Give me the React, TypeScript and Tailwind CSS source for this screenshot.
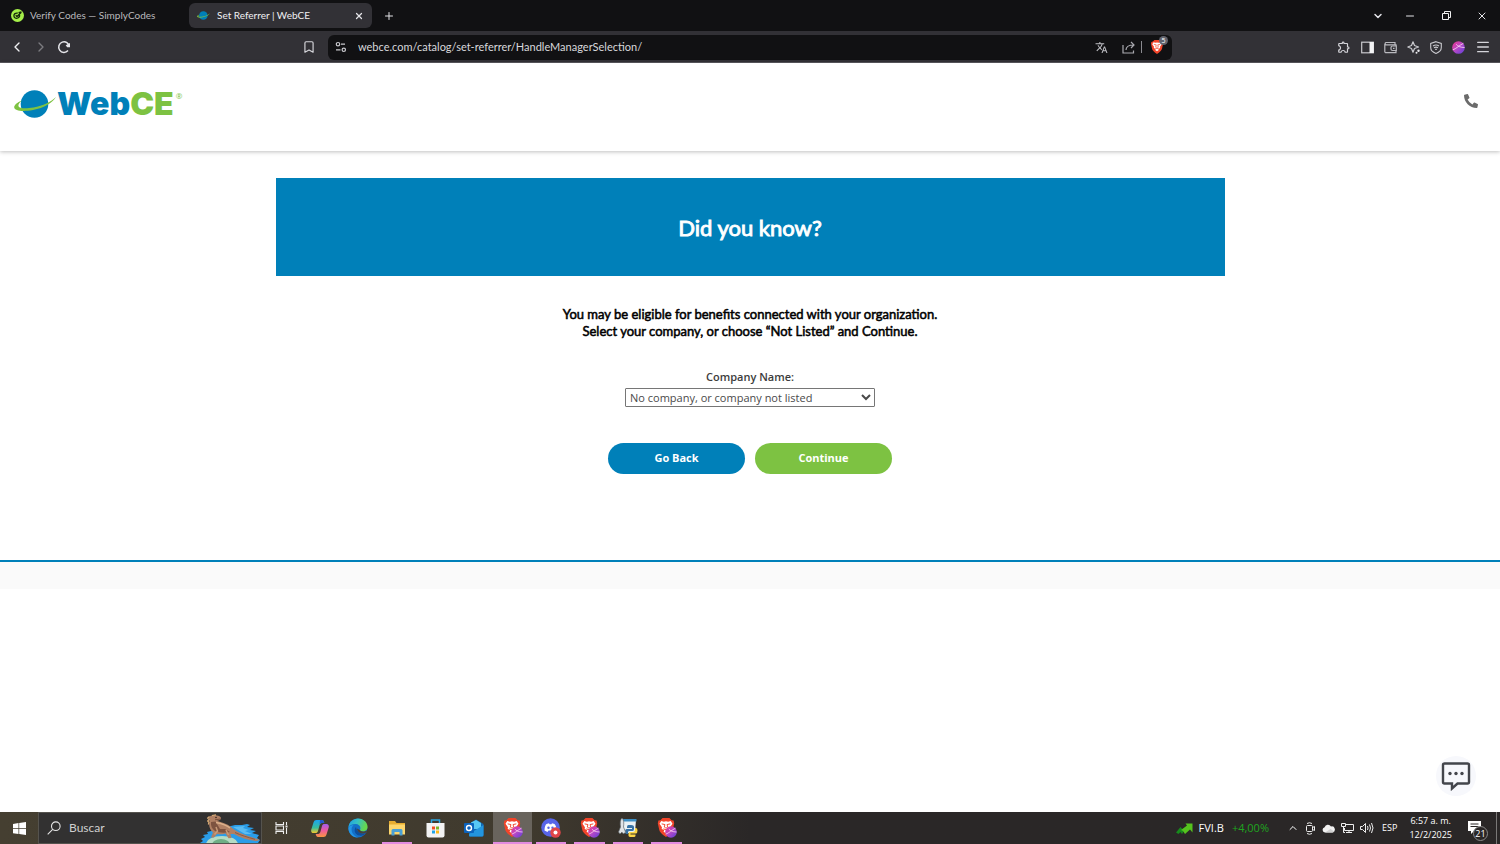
import type { ReactNode } from 'react';
import { ChevronLeft, ChevronRight, ChevronDown, ChevronUp, Minus, X, Plus, Bookmark, Menu } from 'lucide-react';
import { MdTranslate, MdOutlineExtension } from 'react-icons/md';
import { FaPhoneAlt } from 'react-icons/fa';

interface TaskItem {
  label: string;
  icon: ReactNode;
  open?: boolean;
  active?: boolean;
}

function Planet({ className }: { className: string }) {
  return (
    <svg viewBox="0 0 42 28" className={className} aria-hidden="true">
      <circle cx="20.5" cy="14" r="13.8" fill="#0080b9" />
      <path
        d="M8 10.5C3 12.5 0 15 .2 17.5C.6 21 9 21.8 19 20C30 18 39 12.5 42 7C37 12 29 15.8 19.5 17.5C11.5 18.9 5.5 18.5 4.5 16.3C3.9 14.8 5.5 12.5 8 10.5Z"
        fill="#7dc242"
      />
    </svg>
  );
}

function SimplyCodesIcon() {
  return (
    <svg viewBox="0 0 13 13" className="h-[13px] w-[13px]" aria-hidden="true">
      <circle cx="6.5" cy="6.5" r="6.5" fill="#a6f04a" />
      <path
        d="M6.8 4.2C4.5 3.6 2.8 5 2.9 6.9C3 8.8 5 9.8 6.8 9C8.4 8.2 8.8 6.6 8.3 5.5M4.7 6.2L6 7.5L10.3 3.3M7.5 3.7L10.5 3"
        fill="none"
        stroke="#17270b"
        strokeWidth="1.3"
      />
    </svg>
  );
}

function BraveShield({ className }: { className: string }) {
  return (
    <svg viewBox="0 0 20 22" className={className} aria-hidden="true">
      <path
        d="M6 0H14L16.5 2.5L18.8 3L19.5 6L18 13C17.5 16 15 18.5 10 22C5 18.5 2.5 16 2 13L.5 6L1.2 3L3.5 2.5Z"
        fill="#f2452a"
      />
      <path
        d="M4.5 3.6L7.5 4.3L10 3.8L12.5 4.3L15.5 3.6L17.5 6.6L14.7 10.6L15 12.6L12 14L12.8 15.8L10 17.6L7.2 15.8L8 14L5 12.6L5.3 10.6L2.5 6.6Z"
        fill="#fff"
      />
      <path
        d="M5 6.8L8.8 7.6L8 10.4L9.2 11.3H10.8L12 10.4L11.2 7.6L15 6.8M7 12.6L10 13.6L13 12.6"
        fill="none"
        stroke="#f2452a"
        strokeWidth="1.1"
      />
    </svg>
  );
}

function ProfileBall({ className }: { className: string }) {
  return (
    <svg viewBox="0 0 14 14" className={className} aria-hidden="true">
      <defs>
        <linearGradient id="ball" x1="0" y1="0" x2="1" y2="1">
          <stop offset="0" stopColor="#f0388c" />
          <stop offset=".5" stopColor="#b448c8" />
          <stop offset="1" stopColor="#5a3fd8" />
        </linearGradient>
      </defs>
      <circle cx="7" cy="7" r="6.8" fill="url(#ball)" />
      <path
        d="M.8 9.5C4.5 8.5 8 4.5 12.3 2.5M4.5 3.5C6 5.5 9 7 13.5 7"
        fill="none"
        stroke="#ffd5f2"
        strokeWidth=".9"
      />
    </svg>
  );
}

function BraveProfile() {
  return (
    <span className="relative block h-5 w-5">
      <BraveShield className="h-[19px] w-[18px]" />
      <ProfileBall className="absolute right-0 bottom-0 h-3 w-3" />
    </span>
  );
}

function TuneIcon() {
  return (
    <svg viewBox="0 0 12 12" className="h-3 w-3" fill="none" stroke="#c9c9ce" strokeWidth="1.2" aria-hidden="true">
      <circle cx="3" cy="3.2" r="1.7" />
      <path d="M6 3.2H10M1 8.8H5.5" />
      <circle cx="8.8" cy="8.8" r="1.7" />
    </svg>
  );
}

function ReloadIcon() {
  return (
    <svg viewBox="0 0 14 14" className="h-3.5 w-3.5" aria-hidden="true">
      <path d="M11 10.6A5.3 5.3 0 1 1 12.3 6.6" fill="none" stroke="#e6e6ea" strokeWidth="1.5" />
      <path d="M8.7 5.2L13 3V7.3H10.2Z" fill="#e6e6ea" />
    </svg>
  );
}

function ShareIcon() {
  return (
    <svg viewBox="0 0 13 13" className="h-[13px] w-[13px]" fill="none" stroke="#a9a9af" strokeWidth="1.2" aria-hidden="true">
      <path d="M1 4V12H11.5V9.5" />
      <path d="M4 9C4 5.5 6.5 4 11.8 4M9 1L12 4L9 7" />
    </svg>
  );
}

function RestoreIcon() {
  return (
    <svg viewBox="0 0 9 9" className="h-[9px] w-[9px]" fill="none" stroke="#f0f0f0" aria-hidden="true">
      <path d="M.5 2.5H6.5V8.5H.5ZM2.5 2.5V.5H8.5V6.5H6.5" />
    </svg>
  );
}

function SidebarIcon() {
  return (
    <svg viewBox="0 0 13 13" className="h-[13px] w-[13px]" aria-hidden="true">
      <rect x=".7" y="1.2" width="11.6" height="10.6" fill="none" stroke="#c9c9ce" strokeWidth="1.2" />
      <path d="M8.5 1H12.8V12H8.5Z" fill="#f3f3f5" />
    </svg>
  );
}

function WalletIcon() {
  return (
    <svg viewBox="0 0 13 13" className="h-[13px] w-[13px]" fill="none" stroke="#b9b9be" strokeWidth="1.2" aria-hidden="true">
      <path d="M12 5V3.8H2A1.2 1.2 0 0 1 2 1.5H11V3.8M.8 2.7V10.5A1.2 1.2 0 0 0 2 11.7H12V9.5" />
      <path d="M12.3 5H8.5A1.5 1.5 0 0 0 7 6.5V8A1.5 1.5 0 0 0 8.5 9.5H12.3Z" />
      <path d="M9 7.3H10.5" />
    </svg>
  );
}

function LeoIcon() {
  return (
    <svg viewBox="0 0 13 13" className="h-[13px] w-[13px]" fill="none" stroke="#c9c9ce" strokeWidth="1.2" aria-hidden="true">
      <path d="M6 .8L7.5 4.5L11.5 6L7.5 7.5L6 11.2L4.5 7.5L.8 6L4.5 4.5Z" strokeLinejoin="round" />
      <circle cx="11.5" cy="9.8" r="1.2" fill="#e9e9ee" stroke="none" />
      <circle cx="9.5" cy="11.8" r="1" fill="#e9e9ee" stroke="none" />
    </svg>
  );
}

function VpnIcon() {
  return (
    <svg viewBox="0 0 12 13" className="h-[13px] w-3" fill="none" stroke="#c9c9ce" strokeWidth="1.1" aria-hidden="true">
      <path d="M6 .7L11.3 2.5V6.5C11.3 9.5 9 11.3 6 12.4C3 11.3.7 9.5.7 6.5V2.5Z" />
      <path d="M3 5C5 3.7 7 3.7 9 5M4 6.7C5.3 5.9 6.7 5.9 8 6.7M5.2 8.4H6.8" />
    </svg>
  );
}

function WindowsIcon() {
  return (
    <svg viewBox="0 0 13 13" className="h-[13px] w-[13px]" fill="#fff" aria-hidden="true">
      <path d="M0 1.9L5.5 1.1V6.2H0ZM6.2 1L13 0V6.2H6.2ZM0 6.9H5.5V12L0 11.2ZM6.2 6.9H13V13L6.2 12.1Z" />
    </svg>
  );
}

function LizardArt() {
  return (
    <svg viewBox="0 0 62 30" className="h-[30px] w-[62px]" aria-hidden="true">
      <path
        d="M1 30L4 28L2 26L6 24L4 22L9 21L8 19L16 17L28 14L36 12H43L48 11L51 12L48 14L55 15L51 17L57 18L53 20L60 22L58 25L61 27L59 30Z"
        fill="#2a9de9"
      />
      <path d="M34 14L46 13L44 15L50 17L46 18L53 21H46Z" fill="#5bbcf2" />
      <ellipse cx="23" cy="31" rx="16" ry="8" fill="#b5dcc4" />
      <ellipse cx="22" cy="32" rx="9" ry="6" fill="#6fae85" />
      <path
        d="M10 5C10 3 12.5 2 15.5 2.2C19 2.3 22 3.2 22 5.3C22 7 20 7.5 18 7.8C22.5 9.5 28 10.5 32 14C37 19 47 22.5 60 26.5C60.500 27.300 59 28 57 28C48 27 41 24.500 35 21L31.500 21L32.500 25L29.500 25.300L26.500 20.500C23.500 21.500 20 21.500 18 21L15 24.500L12 24.500L14 19.500C11 17 9.500 13 10.500 9Z"
        fill="#b08064"
      />
      <path d="M12 9C11.500 13 13 16 16 18C20 20 26 20 31 19L26 16L21 16L16.500 8.500Z" fill="#7d5340" />
      <path d="M17 9.500C22 10.500 27 11.500 31 15" fill="none" stroke="#dbb08b" strokeWidth="1.300" />
      <path d="M36 19.500C42 22.500 48 24 56 26.300" fill="none" stroke="#8a5b44" />
      <path d="M10.500 3.500L8.700 5L10 6.500L8.700 8L10 9.500L9.300 11.500M13 2.500L17 1.800" fill="none" stroke="#dcae78" strokeWidth="1.200" />
      <path d="M17 14L18.500 18L15.500 21.500M27 17L29.500 22" fill="none" stroke="#c99a77" strokeWidth="1.500" />
      <path d="M16 6.800L21.500 6" stroke="#6b4332" strokeWidth=".8" />
      <circle cx="17" cy="4.500" r=".8" fill="#332018" />
    </svg>
  );
}

function TaskViewIcon() {
  return (
    <svg viewBox="0 0 13 12" className="h-3 w-[13px]" fill="none" stroke="#eee" strokeWidth="1.1" aria-hidden="true">
      <path d="M1 0V2.5H8.5V0M1 12V9.5H8.5V12M1 4H8.5V8H1ZM11.5 0V3M11.5 6V12" />
      <path d="M10.5 3.5H12.5V5.5H10.5Z" fill="#eee" stroke="none" />
    </svg>
  );
}

function CopilotIcon() {
  return (
    <svg viewBox="0 0 18 17" className="h-[17px] w-[18px]" aria-hidden="true">
      <defs>
        <linearGradient id="copA" x1="0" y1="0" x2="0" y2="1">
          <stop offset="0" stopColor="#1aa3f0" />
          <stop offset=".6" stopColor="#39bd9a" />
          <stop offset="1" stopColor="#f4c92c" />
        </linearGradient>
        <linearGradient id="copB" x1="0" y1="0" x2="0" y2="1">
          <stop offset="0" stopColor="#a35cf0" />
          <stop offset=".5" stopColor="#ee5a9c" />
          <stop offset="1" stopColor="#fa9440" />
        </linearGradient>
      </defs>
      <path d="M5.5 0H11C12.5 0 13 1.5 13.3 3H11C9.5 3 9 4 8.5 5.5L7 11C6.5 12.5 5.8 13 4.5 13H2.5C.5 13-.2 11.5.3 9.5L2.5 2.5C3 .8 4 0 5.5 0Z" fill="url(#copA)" />
      <path d="M12.5 17H7C5.5 17 5 15.5 4.7 14H7C8.5 14 9 13 9.5 11.5L11 6C11.5 4.5 12.2 4 13.5 4H15.5C17.5 4 18.2 5.5 17.7 7.5L15.5 14.5C15 16.2 14 17 12.5 17Z" fill="url(#copB)" />
      <path d="M9 0H11C12.5 0 13 1.5 13.3 3H11C10 3 9 3.5 8.5 5Z" fill="#2459cf" />
    </svg>
  );
}

function EdgeIcon() {
  return (
    <svg viewBox="0 0 20 20" className="h-5 w-5" aria-hidden="true">
      <defs>
        <linearGradient id="edge" x1="0" y1="0" x2="1" y2=".3">
          <stop offset="0" stopColor="#1d9de4" />
          <stop offset=".5" stopColor="#35c1c4" />
          <stop offset="1" stopColor="#67d84b" />
        </linearGradient>
      </defs>
      <circle cx="9.8" cy="10" r="9.5" fill="#1470c8" />
      <path d="M.4 9.5C1 4 5 .5 10 .5C16 .5 19.7 5 19.6 9C19.5 12 17 13.5 14.5 13.5C12.5 13.5 11.5 12.8 12 11.9C13 10.5 12.5 6.5 8 6C4.5 5.7 1.5 7 .4 9.5Z" fill="url(#edge)" />
      <path d="M8 9C5.5 11.5 6.5 16.5 11 17.5C14 18.1 16.5 17 18.2 15C15 16.5 9.5 15.5 8 9Z" fill="#0d4f9c" />
      <path d="M11.9 12C12.6 13.3 15 14 17.5 12.9C19 12.3 19.5 13 18.5 14.5C15 16.5 9.5 15.5 9 10.5Z" fill="#48413a" />
      <path d="M4 9C2.5 13 5 18 10 19.5C5 20 .3 15.5.4 10C1 8 3 7 5.5 7.3Z" fill="#2496e6" />
    </svg>
  );
}

function FolderIcon() {
  return (
    <svg viewBox="0 0 18 16" className="h-4 w-[18px]" aria-hidden="true">
      <path d="M1 1H7L8.5 3H17V14H1Z" fill="#e7ad31" />
      <path d="M1 4.5H17V14.5H1Z" fill="#fdd66d" />
      <path d="M3.5 15.5V10.5Q3.5 9 5 9H13Q14.5 9 14.5 10.5V15.5H11.5V12H6.5V15.5Z" fill="#4a9fd4" />
    </svg>
  );
}

function StoreIcon() {
  return (
    <svg viewBox="0 0 19 19" className="h-[19px] w-[19px]" aria-hidden="true">
      <path d="M5.5 5V1H13.5V5" fill="none" stroke="#2ba6e0" strokeWidth="1.5" />
      <path d="M.5 4H18.5V16.5Q18.5 18.5 16.5 18.5H2.5Q.5 18.5.5 16.5Z" fill="#f3f3f3" />
      <path d="M6 7.5H9V10.5H6Z" fill="#f05023" />
      <path d="M10 7.5H13V10.5H10Z" fill="#7db928" />
      <path d="M6 11.5H9V14.5H6Z" fill="#20a3e8" />
      <path d="M10 11.5H13V14.5H10Z" fill="#fbb91a" />
    </svg>
  );
}

function OutlookIcon() {
  return (
    <svg viewBox="0 0 20 18" className="h-[18px] w-5" aria-hidden="true">
      <path d="M5 5L12 .5L19.5 5V16Q19.5 17.5 18 17.5H6Q5 17.5 5 16Z" fill="#1268b3" />
      <path d="M7 3.5L12 1L17 4V10H7Z" fill="#57c8f5" />
      <path d="M5 15L19.5 6V16Q19.5 17.5 18 17.5H6Q5 17.5 5 16Z" fill="#2395df" />
      <rect y="4" width="10" height="10" rx="1" fill="#0c63bd" />
      <circle cx="5" cy="9" r="2.5" fill="none" stroke="#fff" strokeWidth="1.4" />
    </svg>
  );
}

function DiscordIcon() {
  return (
    <svg viewBox="0 0 20 20" className="h-5 w-5" aria-hidden="true">
      <circle cx="9.5" cy="9.5" r="9.3" fill="#5865e8" />
      <path d="M3.5 12.5C3.5 9 4.5 6.5 5.5 6L8 5.3L8.5 6.2H10.5L11 5.3L13.5 6C14.5 7 15.5 9 15.5 12.5L12.5 14L11.5 12.5H7.5L6.5 14Z" fill="#fff" />
      <circle cx="7.5" cy="9.7" r="1.2" fill="#5865e8" />
      <circle cx="11.5" cy="9.7" r="1.2" fill="#5865e8" />
      <circle cx="14.5" cy="14.5" r="5.2" fill="#e04549" />
      <circle cx="14.5" cy="14.5" r="2" fill="#fff" />
    </svg>
  );
}

function PythonIcon() {
  return (
    <svg viewBox="0 0 20 20" className="h-5 w-5" aria-hidden="true">
      <path d="M3 1.5H18L17 15H4Z" fill="#e9f1f5" />
      <path d="M3 1H18.5V3.5H3Z" fill="#3d8fc4" />
      <path d="M13 7H10.5Q9 7 9 9V10H14V11H8.5Q7 11 7 13.5T8.5 16H10V14Q10 13 11.5 13H14.5Q16 13 16 11V9Q16 7 13 7Z" fill="#3672a5" />
      <path d="M13.5 19H16Q17.5 19 17.5 17.5V16.5H12.5V15.5H18Q19.5 15 19.5 12.5T18 10H17V12Q17 14 15 14H12Q10.5 14 10.5 15.5V17.5Q10.5 19 13.5 19Z" fill="#fbd545" />
      <path d="M4 0C6 2 6 5 5.5 9L7.5 14L5.5 16L4 14L2 16L.5 14L2.5 9C2 5 2 2 4 0Z" fill="#dfe3e6" stroke="#60676c" strokeWidth=".7" />
    </svg>
  );
}

function StockIcon() {
  return (
    <svg viewBox="0 0 17 11" className="h-[11px] w-[17px]" aria-hidden="true">
      <path d="M0 9.5L4.5 4L8 8L6 11L4.5 9L2.5 11Z" fill="#178a1c" />
      <path d="M5 7L11 2.5L9.5.5H16.5V9.5L14 6.5L9 11L7 8Z" fill="#55c31e" />
    </svg>
  );
}

function MeetIcon() {
  return (
    <svg viewBox="0 0 11 13" className="h-[13px] w-[11px]" fill="none" stroke="#eee" aria-hidden="true">
      <rect x="1.5" y="3.5" width="6" height="6" rx="1" />
      <path d="M7.5 5.5L9.5 4.5V8.5L7.5 7.5M2 1.5Q4.5 0 7 1.5M2 11.5Q4.5 13 7 11.5" />
    </svg>
  );
}

function CloudIcon() {
  return (
    <svg viewBox="0 0 13 9" className="h-[9px] w-[13px]" aria-hidden="true">
      <path d="M3 8.5A2.7 2.7 0 0 1 2.6 3.2A3.6 3.6 0 0 1 9 2.5A3 3 0 0 1 10.5 8.5Z" fill="#f2f2f2" />
      <path d="M3 8.5L8.5 5L12.2 7.5Q11.5 8.5 10.5 8.5Z" fill="#cfcfcf" />
    </svg>
  );
}

function NetworkIcon() {
  return (
    <svg viewBox="0 0 13 12" className="h-3 w-[13px]" fill="none" stroke="#eee" aria-hidden="true">
      <path d="M5 2.5H12.5V8.5H3.5V6M8 8.5V10.5M5 10.5H11M.5 1.5H4.5V4.5H.5ZM2.5 4.5V10.5H4" />
    </svg>
  );
}

function VolumeIcon() {
  return (
    <svg viewBox="0 0 14 12" className="h-3 w-3.5" fill="none" stroke="#eee" aria-hidden="true">
      <path d="M.5 4.5H2.5L5.5 1.5V10.5L2.5 7.5H.5ZM7.5 4Q8.5 6 7.5 8M9.5 2.5Q11.5 6 9.5 9.5M11.5 1Q14.5 6 11.5 11" />
    </svg>
  );
}

function SearchIcon() {
  return (
    <svg viewBox="0 0 14 14" className="h-3.5 w-3.5" fill="none" stroke="#e6e6e6" strokeWidth="1.1" aria-hidden="true">
      <circle cx="8.8" cy="5.2" r="4.3" />
      <path d="M5.7 8.3L.7 13.3" />
    </svg>
  );
}

function ChatIcon() {
  return (
    <svg viewBox="0 0 30 30" className="h-[30px] w-[30px]" aria-hidden="true">
      <path
        d="M3.5 2.5H26.5Q28 2.5 28 4V21Q28 22.5 26.5 22.5H16.5L11 27.5V22.5H3.5Q2 22.5 2 21V4Q2 2.5 3.5 2.5Z"
        fill="none"
        stroke="#43454b"
        strokeWidth="2.4"
      />
      <circle cx="9" cy="12.5" r="1.7" fill="#43454b" />
      <circle cx="15" cy="12.5" r="1.7" fill="#43454b" />
      <circle cx="21" cy="12.5" r="1.7" fill="#43454b" />
    </svg>
  );
}

const taskItems: TaskItem[] = [
  { label: 'Vista de tareas', icon: <TaskViewIcon /> },
  { label: 'Copilot', icon: <CopilotIcon /> },
  { label: 'Edge', icon: <EdgeIcon /> },
  { label: 'Explorador', icon: <FolderIcon />, open: true },
  { label: 'Store', icon: <StoreIcon /> },
  { label: 'Outlook', icon: <OutlookIcon /> },
  { label: 'Brave', icon: <BraveProfile />, open: true, active: true },
  { label: 'Discord', icon: <DiscordIcon />, open: true },
  { label: 'Brave 2', icon: <BraveProfile />, open: true },
  { label: 'Python', icon: <PythonIcon />, open: true },
  { label: 'Brave 3', icon: <BraveProfile />, open: true },
];

function TabBar() {
  return (
    <div className="flex h-[31px] items-center bg-[#111113] font-['Lato'] text-[10px] text-[#e4e4e8]">
      <button className="flex w-[189px] items-center gap-1.5 pl-[11px] text-[#b9b9bd]">
        <SimplyCodesIcon />
        <span>Verify Codes — SimplyCodes</span>
      </button>
      <div className="flex h-[25px] w-[183px] items-center rounded-md bg-[#323136] px-2">
        <Planet className="h-[9px] w-[13px]" />
        <span className="ml-[7px] flex-1 text-[#f0f0f3]">Set Referrer | WebCE</span>
        <button aria-label="Close tab">
          <X className="h-2.5 w-2.5" strokeWidth={3} />
        </button>
      </div>
      <button className="ml-[11px]" aria-label="New tab">
        <Plus className="h-3 w-3" strokeWidth={2} />
      </button>
      <div className="ml-auto flex items-center">
        <button className="flex w-7 justify-center" aria-label="Search tabs">
          <ChevronDown className="h-3 w-3" strokeWidth={3} />
        </button>
        <button className="flex w-9 justify-center" aria-label="Minimize">
          <Minus className="h-3 w-3" />
        </button>
        <button className="flex w-9 justify-center" aria-label="Restore">
          <RestoreIcon />
        </button>
        <button className="flex w-9 justify-center" aria-label="Close window">
          <X className="h-3 w-3" />
        </button>
      </div>
    </div>
  );
}

function Toolbar() {
  return (
    <div className="flex h-8 items-center border-b border-[#5a595e] bg-[#323136] pt-px text-[#d5d5da]">
      <div className="flex items-center gap-2 pl-[9px]">
        <button aria-label="Back">
          <ChevronLeft className="h-4 w-4 text-[#f0f0f3]" />
        </button>
        <button aria-label="Forward">
          <ChevronRight className="h-4 w-4 text-[#7c7b80]" />
        </button>
        <button aria-label="Reload">
          <ReloadIcon />
        </button>
      </div>
      <div className="flex flex-1 items-center justify-center gap-3 pl-[66px]">
        <button aria-label="Bookmark">
          <Bookmark className="h-3.5 w-3.5" />
        </button>
        <div className="flex h-[25px] w-[844px] items-center rounded-md bg-[#111113] pl-[7px] pr-0.5">
          <TuneIcon />
          <input
            aria-label="Address"
            className="ml-[11px] flex-1 bg-transparent font-['Lato'] text-[11px] text-[#d8d8dc] outline-none"
            defaultValue="webce.com/catalog/set-referrer/HandleManagerSelection/"
          />
          <button aria-label="Translate">
            <MdTranslate className="h-[13px] w-[13px] text-[#c0c0c5]" />
          </button>
          <button className="ml-3.5" aria-label="Share">
            <ShareIcon />
          </button>
          <span className="ml-1.5 h-3 w-px bg-[#8a8a90]" />
          <button className="relative ml-2 mr-1.5" aria-label="Shields">
            <BraveShield className="h-3.5 w-3.5" />
            <span className="absolute -right-1 -top-1 flex h-[9px] w-[9px] items-center justify-center rounded-full bg-[#62636d] text-[7px] leading-none text-white">
              5
            </span>
          </button>
        </div>
      </div>
      <div className="flex items-center gap-2.5 pr-[9px]">
        <button aria-label="Extensions">
          <MdOutlineExtension className="h-3.5 w-3.5" />
        </button>
        <button aria-label="Sidebar">
          <SidebarIcon />
        </button>
        <button aria-label="Wallet">
          <WalletIcon />
        </button>
        <button aria-label="Leo">
          <LeoIcon />
        </button>
        <button aria-label="VPN">
          <VpnIcon />
        </button>
        <button aria-label="Profile">
          <ProfileBall className="h-[13px] w-[13px]" />
        </button>
        <button aria-label="Menu">
          <Menu className="h-4 w-4" />
        </button>
      </div>
    </div>
  );
}

function SiteHeader() {
  return (
    <header className="flex h-[88px] items-center justify-between bg-white pl-3.5 pr-[22px] shadow-[0_1px_4px_rgba(0,0,0,0.25)]">
      <a href="#home" className="flex items-center pb-1.5" aria-label="WebCE">
        <Planet className="h-7 w-[42px]" />
        <span className="ml-px font-['Inter'] text-[32px] leading-7 font-black text-[#0080b9]">
          Web<span className="text-[#7dc242]">CE</span>
        </span>
        <span className="ml-0.5 self-start text-[8px] leading-3 text-[#7dc242]">®</span>
      </a>
      <a href="#phone" className="pb-3" aria-label="Phone">
        <FaPhoneAlt className="h-3.5 w-3.5 text-[#6b6b6b]" />
      </a>
    </header>
  );
}

function ReferrerForm() {
  return (
    <main className="flex flex-col items-center pt-[27px]">
      <h1 className="flex h-[98px] w-full max-w-[949px] items-center justify-center bg-[#0080b9] font-['Lato'] text-[22px] font-normal text-white [-webkit-text-stroke:0.04em]">
        Did you know?
      </h1>
      <p className="mt-[30px] text-center font-['Lato'] text-[13px] leading-[17px] font-normal text-black [-webkit-text-stroke:0.04em]">
        You may be eligible for benefits connected with your organization.
        <br />
        Select your company, or choose “Not Listed” and Continue.
      </p>
      <form className="mt-[27px] flex flex-col items-center" onSubmit={e => e.preventDefault()}>
        <label htmlFor="company" className="text-[11px] leading-5 font-semibold text-[#3c3c3c]">
          Company Name:
        </label>
        <select
          id="company"
          className="mt-px h-[19px] w-[250px] rounded-[1px] border border-[#767676] bg-white text-[11px] text-[#4a4a4a]"
        >
          <option>No company, or company not listed</option>
        </select>
        <div className="mt-9 flex gap-2.5 text-[11px] font-bold text-white">
          <button type="button" className="h-[31px] w-[137px] rounded-full bg-[#0080b9]">
            Go Back
          </button>
          <button type="submit" className="h-[31px] w-[137px] rounded-full bg-[#7dc242]">
            Continue
          </button>
        </div>
      </form>
    </main>
  );
}

function Taskbar() {
  return (
    <div className="flex h-8 items-stretch bg-linear-to-r from-[#453f31] via-[#403a2e] via-35% to-[#2a2727] to-50% text-white">
      <button className="flex w-[38px] items-center justify-center" aria-label="Inicio">
        <WindowsIcon />
      </button>
      <div className="flex w-[224px] items-center border border-[#55534e] bg-[#323131] pl-2">
        <SearchIcon />
        <input
          aria-label="Buscar"
          placeholder="Buscar"
          className="ml-2 w-[130px] bg-transparent font-['Lato'] text-xs outline-none placeholder:text-[#cfcfcf]"
        />
        <span className="ml-auto shrink-0">
          <LizardArt />
        </span>
      </div>
      <div className="grid w-[424px] grid-cols-11">
        {taskItems.map(item => (
          <button
            key={item.label}
            aria-label={item.label}
            className={`relative flex items-center justify-center ${item.active ? 'bg-[#69645d]' : ''}`}
          >
            {item.icon}
            {item.open && (
              <span
                className={`absolute bottom-0 h-0.5 bg-[#e28be0] ${item.active ? 'inset-x-0' : 'inset-x-1'}`}
              />
            )}
          </button>
        ))}
      </div>
      <div className="ml-auto flex items-center text-[9px]">
        <StockIcon />
        <span className="ml-1.5 text-[11px]">FVI.B</span>
        <span className="ml-2 text-[11px] text-[#1fa51f]">+4,00%</span>
        <div className="ml-[18px] flex items-center gap-1.5">
          <ChevronUp className="h-3 w-3" />
          <MeetIcon />
          <CloudIcon />
          <NetworkIcon />
          <VolumeIcon />
        </div>
        <span className="ml-2">ESP</span>
        <div className="ml-3 text-center leading-3.5">
          <div>6:57 a. m.</div>
          <div>12/2/2025</div>
        </div>
        <button className="relative ml-4 mr-2.5 h-[18px] w-[18px]" aria-label="Notificaciones">
          <svg viewBox="0 0 18 18" className="h-[18px] w-[18px]" aria-hidden="true">
            <path d="M0 2H13V12H6L3 15V12H0Z" fill="#fff" />
            <path d="M2.5 5H10.5M2.5 7.5H10.5" stroke="#2a2727" />
          </svg>
          <span className="absolute -bottom-1 -right-0.5 flex h-[15px] w-[15px] items-center justify-center rounded-full border border-[#8a8a8a] bg-[#2a2727] leading-none">
            21
          </span>
        </button>
        <span className="mr-[3px] h-8 w-px bg-[#7a7877]" />
      </div>
    </div>
  );
}

export default function App() {
  return (
    <div className="flex min-h-screen flex-col bg-white font-['Open_Sans','Noto_Sans',sans-serif]">
      <TabBar />
      <Toolbar />
      <div className="relative flex-1">
        <SiteHeader />
        <ReferrerForm />
        <footer className="mt-[86px] h-[29px] border-t-2 border-[#0080b9] bg-[#fafafa]" />
        <button
          className="absolute right-6 bottom-4 flex h-10 w-10 items-center justify-center rounded-full bg-[#f7f8fc]"
          aria-label="Chat"
        >
          <ChatIcon />
        </button>
      </div>
      <Taskbar />
    </div>
  );
}
